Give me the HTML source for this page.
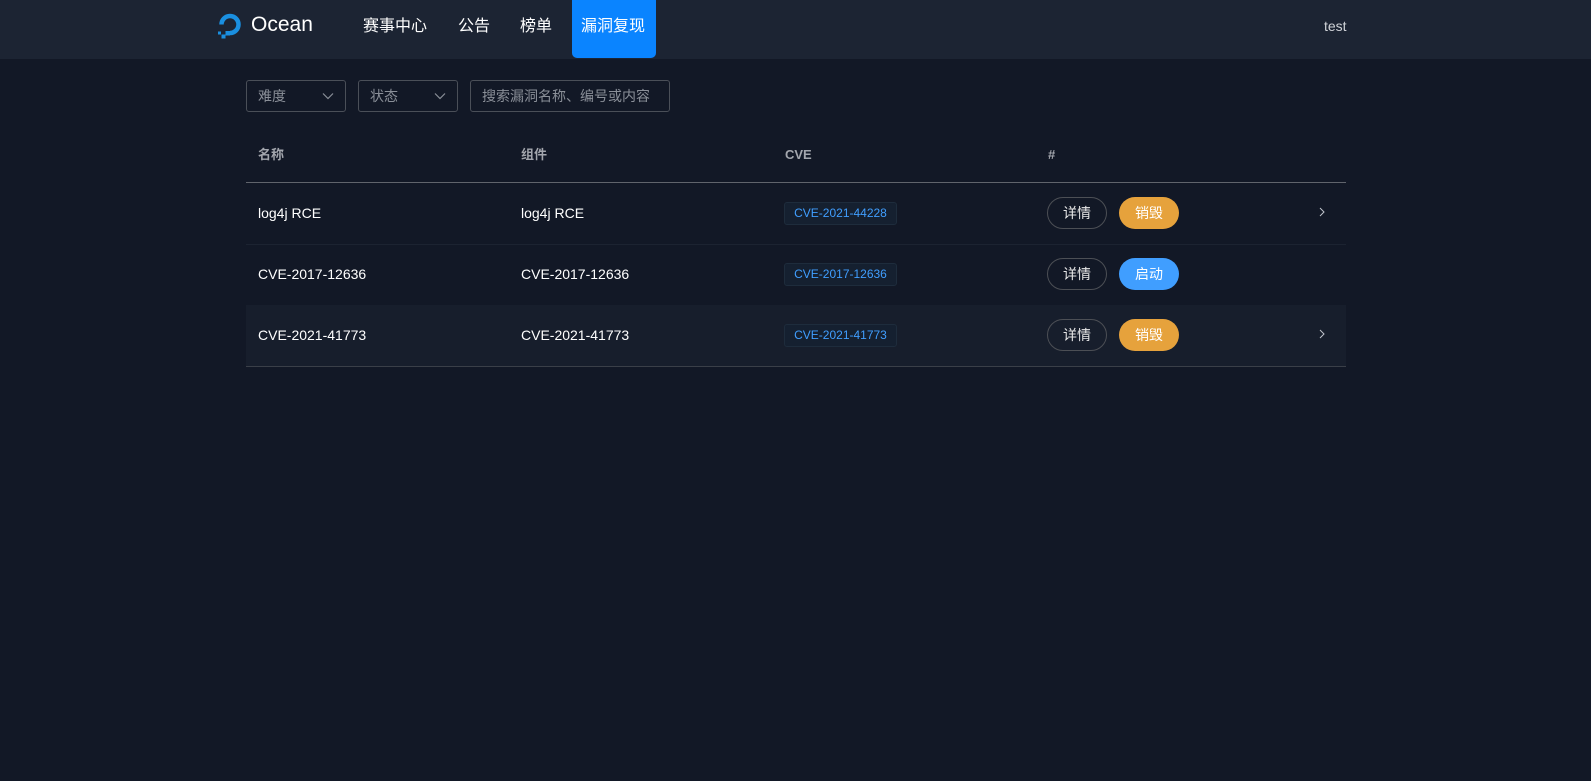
<!DOCTYPE html>
<html><head><meta charset="utf-8"><style>
*{box-sizing:border-box;margin:0;padding:0}
body{width:1591px;height:781px;background:#121826;font-family:"Liberation Sans","Noto Sans CJK SC",sans-serif;color:#fff;overflow:hidden;position:relative}
.hdr{position:absolute;left:0;top:0;width:1591px;height:59px;background:#1c2433}
.abs{position:absolute;white-space:nowrap;line-height:20px}
.nav{font-size:16px;top:17px;color:#fff}
.tab{position:absolute;left:572px;top:0;width:84px;height:58px;background:#0a84ff;border-radius:0 0 5px 5px}
.sel{position:absolute;top:80px;height:32px;border:1px solid #4a4f58;border-radius:3px;font-size:14px;color:#8a8f98;padding:0 11px;line-height:30px}
.sel svg{position:absolute;right:11px;top:11px}
.th{font-size:13px;font-weight:bold;color:#a3a6ad;top:145px}
.td{font-size:14px;color:#fff}
.line{position:absolute;left:246px;width:1100px}
.tag{position:absolute;left:784px;width:113px;height:23px;border:1px solid #1e2c3c;background:#152030;border-radius:3px;color:#409eff;font-size:12px;text-align:center;line-height:21px}
.btn{position:absolute;width:60px;height:32px;border-radius:16px;font-size:14px;text-align:center;line-height:30px}
.d{left:1047px;border:1px solid #4c4f55;color:#e8e8e8}
.o{left:1119px;background:#e6a23c;line-height:32px}
.b{left:1119px;background:#409eff;line-height:32px}
.chev{position:absolute;left:1318px}
</style></head><body>
<div class="hdr"></div>
<svg class="abs" style="left:215px;top:12px" width="28" height="28" viewBox="0 0 28 28">
<path d="M6.5 12.5 A8.5 8.5 0 1 1 15 21" fill="none" stroke="#1a8fe0" stroke-width="4.5"/>
<rect x="10.5" y="19" width="4.5" height="4.5" fill="#1a8fe0"/>
<rect x="6.5" y="22.5" width="4" height="4" fill="#1a8fe0"/>
<rect x="3" y="19.5" width="3" height="3" fill="#1a8fe0"/>
</svg>
<div class="abs" style="left:251px;top:14px;font-size:21px;line-height:22px;color:#fff">Ocean</div>
<div class="abs nav" style="left:363px">赛事中心</div>
<div class="abs nav" style="left:458px">公告</div>
<div class="abs nav" style="left:520px">榜单</div>
<div class="tab"></div>
<div class="abs nav" style="left:581px">漏洞复现</div>
<div class="abs" style="left:1324px;top:16px;font-size:14px;color:#d0d3d8">test</div>

<div class="sel" style="left:246px;width:100px">难度<svg width="12" height="8" viewBox="0 0 12 8"><path d="M1 1.5 6 6.5 11 1.5" fill="none" stroke="#8a8f98" stroke-width="1.2"/></svg></div>
<div class="sel" style="left:358px;width:100px">状态<svg width="12" height="8" viewBox="0 0 12 8"><path d="M1 1.5 6 6.5 11 1.5" fill="none" stroke="#8a8f98" stroke-width="1.2"/></svg></div>
<div class="sel" style="left:470px;width:200px">搜索漏洞名称、编号或内容</div>

<div class="abs th" style="left:258px">名称</div>
<div class="abs th" style="left:521px">组件</div>
<div class="abs th" style="left:785px">CVE</div>
<div class="abs th" style="left:1048px">#</div>
<div class="line" style="top:182px;height:1px;background:#60646c"></div>

<div class="line" style="top:244px;height:1px;background:#1c2331"></div>
<div class="line" style="top:305px;height:61px;background:#171e2c"></div>
<div class="line" style="top:366px;height:1px;background:#3a3f48"></div>

<div class="abs td" style="left:258px;top:203px">log4j RCE</div>
<div class="abs td" style="left:521px;top:203px">log4j RCE</div>
<div class="tag" style="top:202px">CVE-2021-44228</div>
<div class="btn d" style="top:197px">详情</div>
<div class="btn o" style="top:197px">销毁</div>
<svg class="chev" style="top:207px" width="8" height="10" viewBox="0 0 8 10"><path d="M2 1 6 5 2 9" fill="none" stroke="#c0c4cc" stroke-width="1"/></svg>

<div class="abs td" style="left:258px;top:264px">CVE-2017-12636</div>
<div class="abs td" style="left:521px;top:264px">CVE-2017-12636</div>
<div class="tag" style="top:263px">CVE-2017-12636</div>
<div class="btn d" style="top:258px">详情</div>
<div class="btn b" style="top:258px">启动</div>

<div class="abs td" style="left:258px;top:325px">CVE-2021-41773</div>
<div class="abs td" style="left:521px;top:325px">CVE-2021-41773</div>
<div class="tag" style="top:324px">CVE-2021-41773</div>
<div class="btn d" style="top:319px">详情</div>
<div class="btn o" style="top:319px">销毁</div>
<svg class="chev" style="top:329px" width="8" height="10" viewBox="0 0 8 10"><path d="M2 1 6 5 2 9" fill="none" stroke="#c0c4cc" stroke-width="1"/></svg>
</body></html>
